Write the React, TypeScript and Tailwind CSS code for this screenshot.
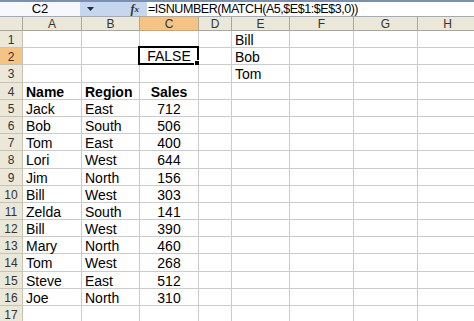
import React from 'react';

const cols = [
  { id: 'A', w: 'w-[59px]' },
  { id: 'B', w: 'w-[58px]' },
  { id: 'C', w: 'w-[59px]' },
  { id: 'D', w: 'w-[33px]' },
  { id: 'E', w: 'w-[58px]' },
  { id: 'F', w: 'w-[64px]' },
  { id: 'G', w: 'w-[64px]' },
  { id: 'H', w: 'w-[60px]' },
];

type Cell = { v: string; bold?: boolean; center?: boolean };

const data: Record<number, Record<string, Cell>> = {
  1: { E: { v: 'Bill' } },
  2: { C: { v: 'FALSE', center: true }, E: { v: 'Bob' } },
  3: { E: { v: 'Tom' } },
  4: {
    A: { v: 'Name', bold: true },
    B: { v: 'Region', bold: true },
    C: { v: 'Sales', bold: true, center: true },
  },
};

const sales: [string, string, string][] = [
  ['Jack', 'East', '712'],
  ['Bob', 'South', '506'],
  ['Tom', 'East', '400'],
  ['Lori', 'West', '644'],
  ['Jim', 'North', '156'],
  ['Bill', 'West', '303'],
  ['Zelda', 'South', '141'],
  ['Bill', 'West', '390'],
  ['Mary', 'North', '460'],
  ['Tom', 'West', '268'],
  ['Steve', 'East', '512'],
  ['Joe', 'North', '310'],
];

sales.forEach(([name, region, amount], i) => {
  data[i + 5] = {
    A: { v: name },
    B: { v: region },
    C: { v: amount, center: true },
  };
});

const rows = Array.from({ length: 17 }, (_, i) => i + 1);

export default function App() {
  return (
    <div className="w-[474px] h-[321px] overflow-hidden bg-white font-['Liberation_Sans',Arial,sans-serif] text-black">
      {/* formula bar */}
      <div className="h-[17px] flex border-t-2 border-[#7b8fae] border-b border-b-[#9aabc4] bg-[#c6d6ef]">
        <div className="w-[80px] bg-[#f6f8fc] text-[13px] leading-[14px] text-center">C2</div>
        <div className="w-[20px] flex items-center justify-center">
          <svg width="7" height="4" viewBox="0 0 7 4">
            <path d="M0 0h7L3.5 4z" fill="#1f2a44" />
          </svg>
        </div>
        <div className="w-[47px] flex items-center justify-end pr-[8px] font-['Liberation_Serif',serif] italic font-bold text-[12px] leading-[14px] text-[#333]">
          f<span className="text-[9px]">x</span>
        </div>
        <div className="flex-1 bg-white pl-[1px] text-[12.5px] leading-[14px] tracking-[-0.45px] whitespace-nowrap">
          =ISNUMBER(MATCH(A5,$E$1:$E$3,0))
        </div>
      </div>

      {/* column headers */}
      <div className="flex h-[14px]">
        <div className="w-[23px] shrink-0 bg-[#ebe8da] border-r border-b border-[#aca899]" />
        {cols.map((c) => (
          <div
            key={c.id}
            className={`${c.w} shrink-0 border-r border-b border-[#aca899] text-[12px] leading-[14px] text-center text-[#333] ${
              c.id === 'C' ? 'bg-[#f5c383] border-b-[#e29f4c]' : 'bg-[#ebe8da]'
            }`}
          >
            {c.id}
          </div>
        ))}
      </div>

      {/* grid */}
      {rows.map((r) => (
        <div key={r} className="flex h-[17.2px]">
          <div
            className={`w-[23px] shrink-0 border-r border-b border-[#c7c4b3] text-[12px] leading-[18px] text-center text-[#333] ${
              r === 2 ? 'bg-[#f5c383]' : 'bg-[#ebe8da]'
            }`}
          >
            {r}
          </div>
          {cols.map((c) => {
            const cell = data[r]?.[c.id];
            const selected = r === 2 && c.id === 'C';
            return (
              <div
                key={c.id}
                className={`${c.w} shrink-0 relative border-r border-b border-[#cbcbcb] text-[14px] whitespace-nowrap ${
                  selected ? 'leading-[17px]' : 'leading-[19px]'
                } ${cell?.center ? 'text-center' : 'pl-[3px]'} ${cell?.bold ? 'font-bold' : ''}`}
              >
                {cell?.v}
                {selected && (
                  <div className="absolute -left-[2px] -top-[2px] -right-[1px] -bottom-[1px] border-2 border-black">
                    <div className="absolute -right-[3px] -bottom-[3px] w-[4px] h-[4px] bg-black border border-white box-content" />
                  </div>
                )}
              </div>
            );
          })}
        </div>
      ))}
    </div>
  );
}
